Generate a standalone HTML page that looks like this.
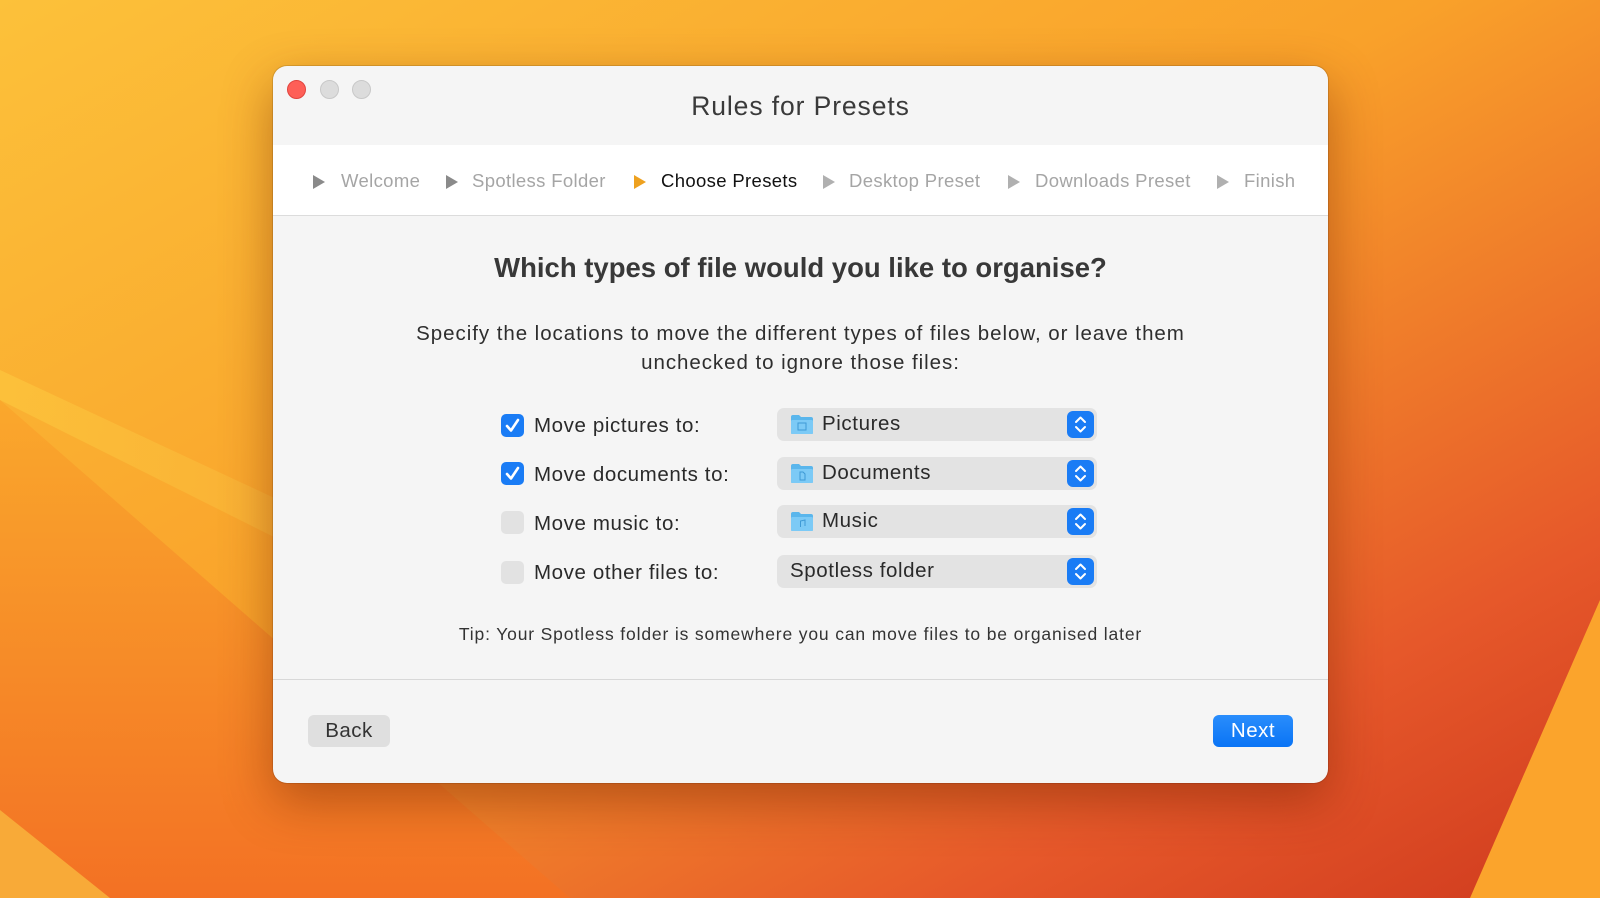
<!DOCTYPE html>
<html><head><style>
*{margin:0;padding:0;box-sizing:border-box}
body{width:1600px;height:898px;overflow:hidden;position:relative;font-family:"Liberation Sans",sans-serif}
#bg{position:absolute;left:0;top:0}
.win{position:absolute;left:273px;top:66px;width:1055px;height:717px;background:#f5f5f5;border-radius:14px;box-shadow:0 18px 50px rgba(110,30,0,.45),0 0 0 1px rgba(0,0,0,.12);overflow:hidden}
.tl{position:absolute;top:80px;width:19px;height:19px;border-radius:50%}
.title{position:absolute;left:0;width:100%;text-align:center;font-size:26.5px;color:#3a3a3a;letter-spacing:0.9px}
.nav{position:absolute;left:0;top:79px;width:1055px;height:71px;background:#fff;border-bottom:1px solid #dcdcdc}
.ni{position:absolute;top:104px;font-size:18.5px;color:#a5a5a5;white-space:nowrap;letter-spacing:0.35px}
.tri{position:absolute;top:109px;width:0;height:0;border-left:12px solid #8a8a8a;border-top:7px solid transparent;border-bottom:7px solid transparent}
.abs{position:absolute;white-space:nowrap}
.cb{position:absolute;left:501px;width:23px;height:23px;border-radius:5px;background:#e2e2e2}
.cb.on{background:#1a7cf5}
.lbl{position:absolute;left:534px;font-size:20.5px;color:#2a2a2a;white-space:nowrap;letter-spacing:0.6px}
.pop{position:absolute;left:777px;width:320px;height:33px;border-radius:7px;background:#e3e3e3}
.pop span{position:absolute;top:4px;font-size:20.5px;color:#2a2a2a;white-space:nowrap;letter-spacing:0.6px}
.st{position:absolute;right:3px;top:3px;width:27px;height:27px;border-radius:6px;background:#1a7cf5}
.btn{position:absolute;top:715px;height:32px;border-radius:6px;font-size:20.5px;text-align:center;line-height:32px;letter-spacing:0.5px}
</style></head><body>
<svg id="bg" width="1600" height="898" viewBox="0 0 1600 898">
<defs>
<linearGradient id="g0" x1="0" y1="0" x2="1" y2="1"><stop offset="0" stop-color="#fcc13a"/><stop offset=".45" stop-color="#f9a12a"/><stop offset=".8" stop-color="#e6582a"/><stop offset="1" stop-color="#cf3a1e"/></linearGradient>
<linearGradient id="g1" x1="0" y1="0" x2="1" y2="0"><stop offset="0" stop-color="#fcc43c"/><stop offset="1" stop-color="#f7a030"/></linearGradient>
<linearGradient id="g2" x1="0" y1="0" x2="0" y2="1"><stop offset="0" stop-color="#faa82c"/><stop offset="1" stop-color="#f37124"/></linearGradient>
</defs>
<rect width="1600" height="898" fill="url(#g0)"/>
<polygon points="0,370 600,650 600,700 0,400" fill="url(#g1)" opacity=".8"/>
<polygon points="0,400 570,898 0,898" fill="url(#g2)"/>
<polygon points="0,810 110,898 0,898" fill="#f8aa38"/>
<polygon points="1470,898 1600,600 1600,898" fill="#fba42c"/>
</svg>
<div class="win">
 <div class="tl" style="left:14px;top:14px;background:#fe5f57;border:1px solid #e0443e"></div>
 <div class="tl" style="left:47px;top:14px;background:#dcdcdc;border:1px solid #c8c8c8"></div>
 <div class="tl" style="left:79px;top:14px;background:#dcdcdc;border:1px solid #c8c8c8"></div>
 <div class="title" style="top:25px">Rules for Presets</div>
 <div class="nav"></div>
 <div class="tri" style="left:40px"></div><div class="ni" style="left:68px">Welcome</div>
 <div class="tri" style="left:173px"></div><div class="ni" style="left:199px">Spotless Folder</div>
 <div class="tri" style="left:361px;border-left-color:#eea11f"></div><div class="ni" style="left:388px;color:#111">Choose Presets</div>
 <div class="tri" style="left:550px;border-left-color:#b0b0b0"></div><div class="ni" style="left:576px">Desktop Preset</div>
 <div class="tri" style="left:735px;border-left-color:#b0b0b0"></div><div class="ni" style="left:762px">Downloads Preset</div>
 <div class="tri" style="left:944px;border-left-color:#b0b0b0"></div><div class="ni" style="left:971px">Finish</div>
 <div class="abs" style="left:0;width:1055px;text-align:center;top:186px;font-size:27.5px;font-weight:bold;color:#383838">Which types of file would you like to organise?</div>
 <div class="abs" style="left:0;width:1055px;text-align:center;top:254px;font-size:20.5px;line-height:28.5px;color:#2e2e2e;letter-spacing:0.95px">Specify the locations to move the different types of files below, or leave them<br>unchecked to ignore those files:</div>
</div>
<div style="position:absolute;left:0;top:0;width:1600px;height:898px">
 <div class="cb on" style="top:414px"><svg width="23" height="23"><path d="M6 12 L10 16.5 L17 6" stroke="#fff" stroke-width="2.6" fill="none" stroke-linecap="round" stroke-linejoin="round"/></svg></div>
 <div class="lbl" style="top:414px">Move pictures to:</div>
 <div class="cb on" style="top:462px"><svg width="23" height="23"><path d="M6 12 L10 16.5 L17 6" stroke="#fff" stroke-width="2.6" fill="none" stroke-linecap="round" stroke-linejoin="round"/></svg></div>
 <div class="lbl" style="top:463px">Move documents to:</div>
 <div class="cb" style="top:511px"></div>
 <div class="lbl" style="top:512px">Move music to:</div>
 <div class="cb" style="top:561px"></div>
 <div class="lbl" style="top:561px">Move other files to:</div>

 <div class="pop" style="top:408px"><svg style="position:absolute;left:13px;top:6px" width="24" height="21"><path d="M1 3 Q1 1 3 1 H9 L11 3 H21 Q23 3 23 5 V19 Q23 20 21 20 H3 Q1 20 1 19Z" fill="#5ab6ec"/><rect x="1" y="6" width="22" height="14" rx="1.5" fill="#7ccaf6"/><rect x="8" y="9" width="8" height="7" fill="none" stroke="#3e9ad6" stroke-width="1"/></svg><span style="left:45px">Pictures</span><div class="st"><svg width="27" height="27"><path d="M9 11 L13.5 6.5 L18 11 M9 16 L13.5 20.5 L18 16" stroke="#fff" stroke-width="2" fill="none" stroke-linecap="round" stroke-linejoin="round"/></svg></div></div>
 <div class="pop" style="top:457px"><svg style="position:absolute;left:13px;top:6px" width="24" height="21"><path d="M1 3 Q1 1 3 1 H9 L11 3 H21 Q23 3 23 5 V19 Q23 20 21 20 H3 Q1 20 1 19Z" fill="#5ab6ec"/><rect x="1" y="6" width="22" height="14" rx="1.5" fill="#7ccaf6"/><path d="M10 9 H13 L15 11 V17 H10Z" fill="none" stroke="#3e9ad6" stroke-width="1"/></svg><span style="left:45px">Documents</span><div class="st"><svg width="27" height="27"><path d="M9 11 L13.5 6.5 L18 11 M9 16 L13.5 20.5 L18 16" stroke="#fff" stroke-width="2" fill="none" stroke-linecap="round" stroke-linejoin="round"/></svg></div></div>
 <div class="pop" style="top:505px"><svg style="position:absolute;left:13px;top:6px" width="24" height="21"><path d="M1 3 Q1 1 3 1 H9 L11 3 H21 Q23 3 23 5 V19 Q23 20 21 20 H3 Q1 20 1 19Z" fill="#5ab6ec"/><rect x="1" y="6" width="22" height="14" rx="1.5" fill="#7ccaf6"/><path d="M10.5 16 V10 L15 9 V15" fill="none" stroke="#3e9ad6" stroke-width="1"/></svg><span style="left:45px">Music</span><div class="st"><svg width="27" height="27"><path d="M9 11 L13.5 6.5 L18 11 M9 16 L13.5 20.5 L18 16" stroke="#fff" stroke-width="2" fill="none" stroke-linecap="round" stroke-linejoin="round"/></svg></div></div>
 <div class="pop" style="top:555px"><span style="left:13px">Spotless folder</span><div class="st"><svg width="27" height="27"><path d="M9 11 L13.5 6.5 L18 11 M9 16 L13.5 20.5 L18 16" stroke="#fff" stroke-width="2" fill="none" stroke-linecap="round" stroke-linejoin="round"/></svg></div></div>

 <div class="abs" style="left:273px;width:1055px;text-align:center;top:624px;font-size:17.5px;color:#333;letter-spacing:0.85px">Tip: Your Spotless folder is somewhere you can move files to be organised later</div>
 <div style="position:absolute;left:273px;top:679px;width:1055px;height:1px;background:#d8d8d8"></div>
 <div class="btn" style="left:308px;width:82px;background:#dfdfdf;color:#333">Back</div>
 <div class="btn" style="left:1213px;width:80px;background:linear-gradient(#2a8dfc,#0a74f5);color:#fff">Next</div>
</div>
</body></html>
